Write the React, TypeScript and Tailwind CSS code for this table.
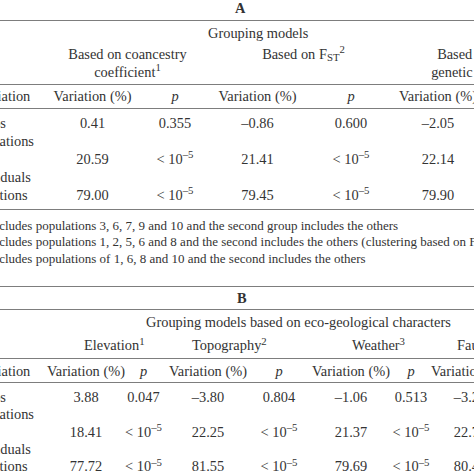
import React from "react";

type P = { children?: React.ReactNode };

const Lt = () => (
  <span>
    &lt; 10<sup>–5</sup>
  </span>
);

const Ctr = ({ children }: P) => (
  <div className="flex justify-center whitespace-nowrap">{children}</div>
);

const Lab = ({ children }: P) => <div className="whitespace-nowrap text-left">{children}</div>;

const rowA = "grid grid-cols-[125px_95px_70px_95px_92px_82px_84px] items-end";
const rowB = "grid grid-cols-[125px_82px_33px_96px_46px_98px_22px_96px_60px] items-end";

const dataA: React.ReactNode[][] = [
  ["Among groups", "0.41", "0.355", "–0.86", "0.600", "–2.05", "0.781"],
  [
    <>
      Among populations
      <br />
      within groups
    </>,
    "20.59",
    <Lt />,
    "21.41",
    <Lt />,
    "22.14",
    <Lt />,
  ],
  [
    <>
      Among individuals
      <br />
      within populations
    </>,
    "79.00",
    <Lt />,
    "79.45",
    <Lt />,
    "79.90",
    <Lt />,
  ],
];

const dataB: React.ReactNode[][] = [
  ["Among groups", "3.88", "0.047", "–3.80", "0.804", "–1.06", "0.513", "–3.21", "0.912"],
  [
    <>
      Among populations
      <br />
      within groups
    </>,
    "18.41",
    <Lt />,
    "22.25",
    <Lt />,
    "21.37",
    <Lt />,
    "22.76",
    <Lt />,
  ],
  [
    <>
      Among individuals
      <br />
      within populations
    </>,
    "77.72",
    <Lt />,
    "81.55",
    <Lt />,
    "79.69",
    <Lt />,
    "80.45",
    <Lt />,
  ],
];

export default function App() {
  return (
    <div className="w-[474px] h-[474px] overflow-hidden bg-white text-[#333] [font-family:'Liberation_Serif',serif]">
      <div className="-ml-[80px] -mt-[4.5px] w-[700px] text-[14.4px] leading-[18px]">
        {/* Section A */}
        <div className="border-b-[1.5px] border-[#7d7d7d] pt-[3px] pb-[3px] pl-[315px] font-bold">A</div>
        <div className="border-b-[1.5px] border-[#7d7d7d]">
          <div className="grid grid-cols-[125px_518px] pt-[3px]">
            <div />
            <div className="pl-[163px] whitespace-nowrap">Grouping models</div>
          </div>
          <div className="grid grid-cols-[125px_165px_187px_166px] items-start pt-[3px] pb-[3px]">
            <div />
            <div className="text-center whitespace-nowrap">
              Based on coancestry
              <br />
              coefficient<sup>1</sup>
            </div>
            <div className="text-center whitespace-nowrap">
              Based on F<sub>ST</sub>
              <sup>2</sup>
            </div>
            <div className="text-center whitespace-nowrap">
              Based on Nei's
              <br />
              genetic distance<sup>3</sup>
            </div>
          </div>
        </div>
        <div className={`${rowA} border-b-[1.5px] border-[#7d7d7d] pt-[2.5px] pb-[2.5px]`}>
          <Lab>Source of variation</Lab>
          <Ctr>Variation (%)</Ctr>
          <Ctr>
            <i>p</i>
          </Ctr>
          <Ctr>Variation (%)</Ctr>
          <Ctr>
            <i>p</i>
          </Ctr>
          <Ctr>Variation (%)</Ctr>
          <Ctr>
            <i>p</i>
          </Ctr>
        </div>
        <div className="border-b-[1.5px] border-[#7d7d7d] pt-[5px] pb-[5px] leading-[18px]">
          {dataA.map((r, i) => (
            <div key={i} className={rowA}>
              <Lab>{r[0]}</Lab>
              {r.slice(1).map((c, j) => (
                <Ctr key={j}>{c}</Ctr>
              ))}
            </div>
          ))}
        </div>
        <div className="-ml-[17px] pt-[8.25px] pb-[18.75px] text-[13px] leading-[16.5px] whitespace-nowrap">
          <div>
            <sup>1</sup>The first group includes populations 3, 6, 7, 9 and 10 and the second group includes the others
          </div>
          <div>
            <sup>2</sup>The first group includes populations 1, 2, 5, 6 and 8 and the second includes the others (clustering
            based on F<sub>ST</sub>)
          </div>
          <div>
            <sup>3</sup>The first group includes populations of 1, 6, 8 and 10 and the second includes the others
          </div>
        </div>

        {/* Section B */}
        <div className="border-t-[1.5px] border-b-[1.5px] border-[#7d7d7d] pt-[1.5px] pb-[2.5px] pl-[317px] font-bold">
          B
        </div>
        <div className="border-b-[1.5px] border-[#7d7d7d] pb-[3.5px]">
          <div className="grid grid-cols-[125px_533px] pt-[3px]">
            <div />
            <div className="pl-[101px] whitespace-nowrap">Grouping models based on eco-geological characters</div>
          </div>
          <div className="grid grid-cols-[125px_115px_142px_120px_156px] pt-[5px]">
            <div />
            <div className="pl-[39px] whitespace-nowrap">
              Elevation<sup>1</sup>
            </div>
            <div className="pl-[32px] whitespace-nowrap">
              Topography<sup>2</sup>
            </div>
            <div className="pl-[50px] whitespace-nowrap">
              Weather<sup>3</sup>
            </div>
            <div className="pl-[35px] whitespace-nowrap">
              Faunal<sup>4</sup>
            </div>
          </div>
        </div>
        <div className={`${rowB} border-b-[1.5px] border-[#7d7d7d] pt-[3px] pb-[2.5px]`}>
          <Lab>Source of variation</Lab>
          <Ctr>Variation (%)</Ctr>
          <Ctr>
            <i>p</i>
          </Ctr>
          <Ctr>Variation (%)</Ctr>
          <Ctr>
            <i>p</i>
          </Ctr>
          <Ctr>Variation (%)</Ctr>
          <Ctr>
            <i>p</i>
          </Ctr>
          <Ctr>Variation (%)</Ctr>
          <Ctr>
            <i>p</i>
          </Ctr>
        </div>
        <div className="pt-[6px] pb-[5px] leading-[17.3px]">
          {dataB.map((r, i) => (
            <div key={i} className={rowB}>
              <Lab>{r[0]}</Lab>
              {r.slice(1).map((c, j) => (
                <Ctr key={j}>{c}</Ctr>
              ))}
            </div>
          ))}
        </div>
      </div>
    </div>
  );
}
